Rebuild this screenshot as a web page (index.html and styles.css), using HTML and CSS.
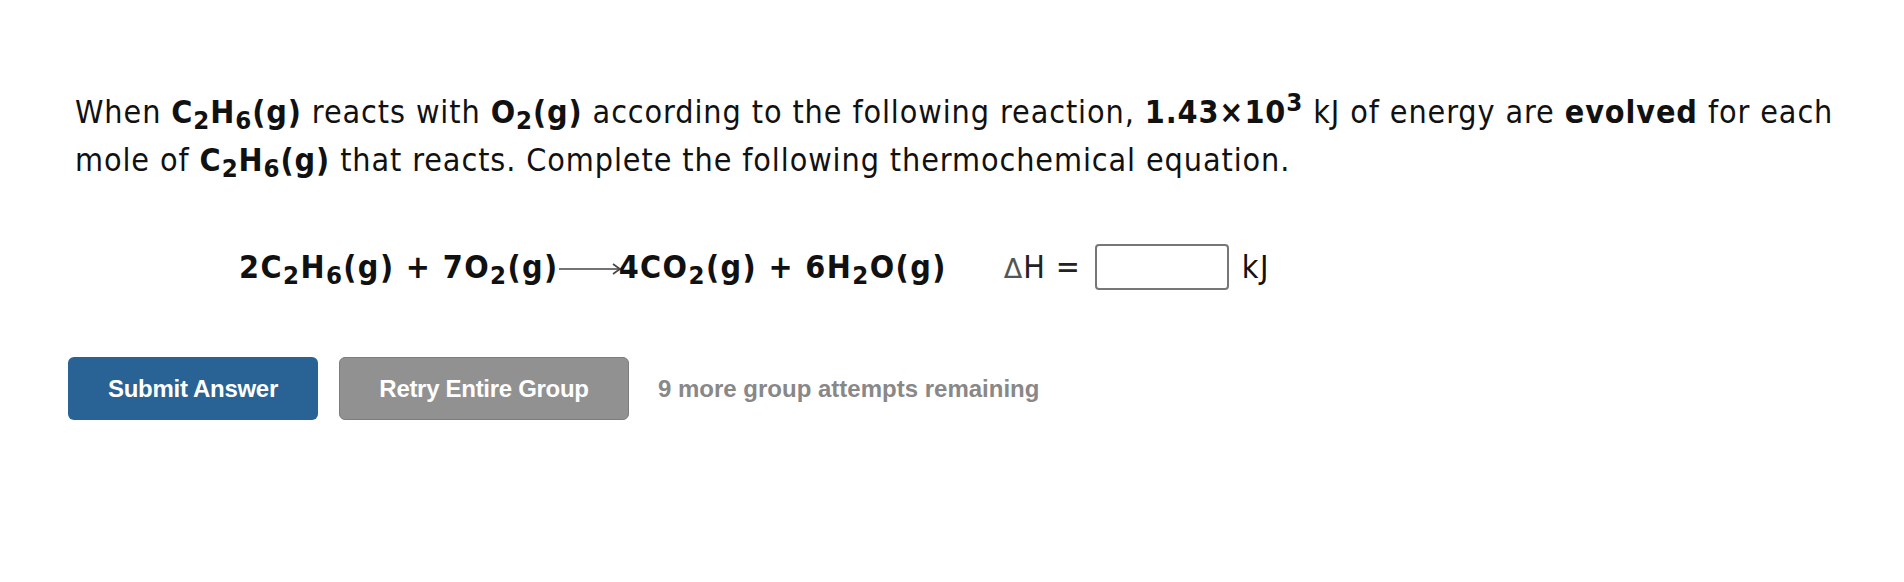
FILE: index.html
```html
<!DOCTYPE html>
<html lang="en">
  <head>
    <meta charset="UTF-8" />
    <meta name="viewport" content="width=device-width, initial-scale=1.0" />
    <title>Thermochemical Equation</title>
    <link rel="stylesheet" href="styles.css">
  </head>
  <body>
  <div class="question">
    <p class="prompt">
      When <b>C<sub>2</sub>H<sub>6</sub>(g)</b> reacts with <b>O<sub>2</sub>(g)</b> according to the following reaction, <b>1.43&times;10<sup>3</sup></b> kJ of energy are <b>evolved</b> for each
      mole of <b>C<sub>2</sub>H<sub>6</sub>(g)</b> that reacts. Complete the following thermochemical equation.
    </p>

    <div class="equation">
      <span class="reaction">
        <b>2C<sub>2</sub>H<sub>6</sub>(g) + 7O<sub>2</sub>(g)</b><svg class="arrow" width="62" height="14" viewBox="0 0 62 14"><line x1="0" y1="7" x2="60" y2="7" stroke="#444" stroke-width="1.6"/><path d="M54 2 L61 7 L54 12" fill="none" stroke="#444" stroke-width="1.6"/></svg><b>4CO<sub>2</sub>(g) + 6H<sub>2</sub>O(g)</b>
      </span>
      <span class="delta"><span class="delta-sign">&Delta;</span>H =</span>
      <input type="text" class="answer" />
      <span class="unit">kJ</span>
    </div>

    <div class="actions">
      <button class="btn btn-submit">Submit Answer</button>
      <button class="btn btn-retry">Retry Entire Group</button>
      <span class="attempts">9 more group attempts remaining</span>
    </div>
  </div>
  </body>
</html>
```

FILE: styles.css
```css
* {
  margin: 0;
  padding: 0;
  box-sizing: border-box;
}

body {
  background: white;
  color: #111;
  font-family: "DejaVu Sans Condensed", "DejaVu Sans", sans-serif;
}

.question {
  padding: 88px 0 0 75px;
}

.prompt {
  font-size: 32px;
  line-height: 48px;
  letter-spacing: 0.9px;
  width: 1790px;
}

sub {
  font-size: 0.8em;
  vertical-align: -0.22em;
  line-height: 0;
}

sup {
  font-size: 0.8em;
  vertical-align: 0.45em;
  line-height: 0;
}

.equation {
  display: flex;
  align-items: center;
  margin-top: 59px;
  padding-left: 164px;
  font-size: 32px;
  letter-spacing: 1.4px;
  height: 48px;
}

.arrow {
  vertical-align: middle;
  margin: 0 -2px 0 0;
}

.delta {
  margin-left: 57px;
  color: #222;
  letter-spacing: 0.9px;
}

.delta-sign {
  color: #555;
  font-family: "DejaVu Sans", sans-serif;
  font-size: 0.85em;
}

.answer {
  width: 134px;
  height: 46px;
  margin-left: 14px;
  border: 2px solid #777;
  border-radius: 4px;
  font-size: 24px;
  padding: 0 8px;
}

.unit {
  margin-left: 13px;
}

.actions {
  display: flex;
  align-items: center;
  margin-top: 66px;
  margin-left: -7px;
}

.btn {
  height: 63px;
  border-radius: 6px;
  color: white;
  font-family: "Liberation Sans", Arial, sans-serif;
  font-weight: bold;
  font-size: 24px;
  letter-spacing: -0.3px;
  cursor: pointer;
}

.btn-submit {
  width: 250px;
  background: #296294;
  border: none;
}

.btn-retry {
  width: 290px;
  margin-left: 21px;
  background: #919191;
  border: 1px solid #7d7d7d;
}

.attempts {
  margin-left: 29px;
  color: #888;
  font-family: "Liberation Sans", Arial, sans-serif;
  font-weight: bold;
  font-size: 24px;
}
```
